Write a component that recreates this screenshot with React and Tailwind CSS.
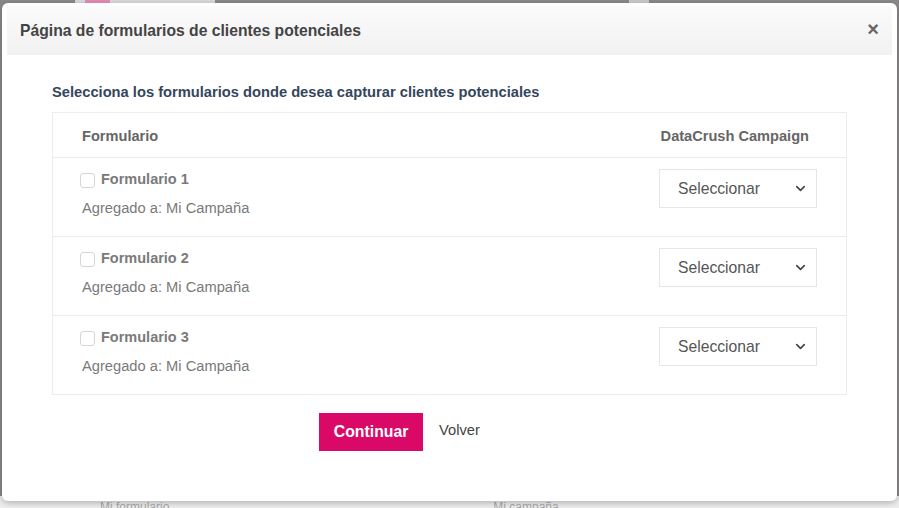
import { ChevronDown } from 'lucide-react';

const forms = ['Formulario 1', 'Formulario 2', 'Formulario 3'];

function FormRow({ name }) {
  return (
    <div className="flex items-start justify-between border-t border-[#ececec] h-[79px] pt-[11px] pl-[27px] pr-[29px]">
      <div className="flex flex-col pt-[1px]">
        <label className="flex items-center gap-[6px] h-[20px]">
          <span className="w-[15px] h-[15px] rounded-[3px] border border-[#d6d6d6] bg-white" />
          <span className="text-[14.5px] font-bold text-[#7a7a7a]">{name}</span>
        </label>
        <span className="mt-[8px] h-[20px] leading-[20px] text-[14.7px] text-[#7a7a7a] pl-[2px]">Agregado a: Mi Campaña</span>
      </div>
      <div className="flex items-center justify-between w-[158px] h-[39px] border border-[#e6e6e6] bg-white pl-[18px] pr-[8px]">
        <span className="text-[15.7px] text-[#555]">Seleccionar</span>
        <ChevronDown size={15} strokeWidth={2.6} className="text-[#444]" />
      </div>
    </div>
  );
}

export default function App() {
  return (
    <div className="relative h-[508px] w-[899px] overflow-hidden font-['Liberation_Sans',Arial,sans-serif]">
      {/* page behind the overlay */}
      <div className="flex flex-col h-full">
        <div className="flex h-[496px] bg-[#8b8889]">
          <div className="w-[75px]" />
          <div className="w-[140px] h-[4px] bg-[#d9d9d9]">
            <div className="ml-[10px] w-[25px] h-[4px] bg-[#e58ab4]" />
          </div>
          <div className="ml-[414px] mt-0 w-[20px] h-[4px] bg-[#c9c9c9]" />
        </div>
        <div className="flex items-start h-[12px] bg-[#eeeeee] text-[12px] text-[#aaa] leading-none">
          <span className="ml-[100px] mt-[5px]">Mi formulario</span>
          <span className="ml-[324px] mt-[5px]">Mi campaña</span>
        </div>
      </div>

      {/* modal */}
      <div className="absolute left-[2px] top-[3px] w-[895px] h-[498px] bg-white rounded-[6px] shadow-[0_2px_6px_rgba(0,0,0,0.25)] px-[5px] pt-[3px] flex flex-col">
        <div className="flex items-center justify-between h-[49px] bg-gradient-to-b from-[#fbfbfb] to-[#f1f1f1] pl-[13px] pr-[13px] rounded-t-[3px]">
          <h1 className="text-[15.7px] font-bold text-[#444]">Página de formularios de clientes potenciales</h1>
          <span className="text-[20px] font-bold text-[#666] leading-none pb-[4px]">×</span>
        </div>

        <div className="flex flex-col px-[45px] pt-[27px]">
          <p className="text-[14.7px] font-bold text-[#34465c] h-[20px] leading-[20px]">Selecciona los formularios donde desea capturar clientes potenciales</p>
          <div className="mt-[10px] border border-[#ececec] w-[795px]">
            <div className="flex items-center justify-between h-[44px] pt-[3px] pl-[29px] pr-[37px] text-[14.6px] font-bold text-[#666]">
              <span>Formulario</span>
              <span>DataCrush Campaign</span>
            </div>
            {forms.map((f) => (
              <FormRow key={f} name={f} />
            ))}
          </div>
          <div className="flex items-center justify-center gap-[16px] mt-[18px] pr-[100px]">
            <button className="w-[104px] h-[38px] bg-[#da0866] text-white text-[15.8px] font-bold">Continuar</button>
            <span className="text-[14.7px] text-[#444] pb-[4px]">Volver</span>
          </div>
        </div>
      </div>
    </div>
  );
}
